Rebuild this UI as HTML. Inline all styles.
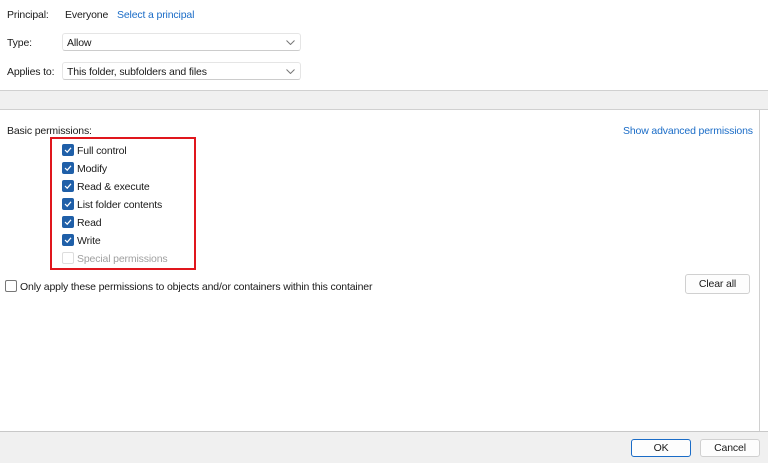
<!DOCTYPE html>
<html><head><style>
body{margin:0;width:768px;height:463px;background:#fff;font-family:"Liberation Sans",sans-serif;font-size:10.5px;letter-spacing:-0.15px;color:#1a1a1a;position:relative;overflow:hidden}
.a{position:absolute;white-space:nowrap}
.sel{position:absolute;left:62px;width:239px;height:18px;border:1px solid #e5e5e5;border-bottom-color:#ccc;border-radius:3px;background:#fff;box-sizing:border-box}
.sel span{position:absolute;left:4px;top:3px}
.sel svg{position:absolute;right:5px;top:6px}
.cb{position:absolute;left:62px;width:12px;height:12px;border-radius:2px;background:#1f5fa8}
.cb svg{position:absolute;left:2px;top:2px}
.lbl{position:absolute;left:77px;margin-top:1px}
.btn{position:absolute;height:18px;border:1px solid #d0d0d0;border-radius:3px;background:#fdfdfd;text-align:center;line-height:16px;box-sizing:border-box}
</style></head><body>
<div class="a" style="left:7px;top:9px">Principal:</div>
<div class="a" style="left:65px;top:9px">Everyone</div>
<div class="a" style="left:117px;top:9px;color:#1a6cc7">Select a principal</div>
<div class="a" style="left:7px;top:37px">Type:</div>
<div class="sel" style="top:33px"><span>Allow</span><svg width="9" height="5"><path d="M0.5 0.5L4.5 4.5L8.5 0.5" stroke="#777" fill="none"/></svg></div>
<div class="a" style="left:7px;top:66px">Applies to:</div>
<div class="sel" style="top:62px"><span>This folder, subfolders and files</span><svg width="9" height="5"><path d="M0.5 0.5L4.5 4.5L8.5 0.5" stroke="#777" fill="none"/></svg></div>
<div class="a" style="left:0;top:90px;width:768px;height:20px;background:#f0f0f0;border-top:1px solid #d0d0d0;border-bottom:1px solid #d0d0d0;box-sizing:border-box"></div>
<div class="a" style="left:759px;top:110px;width:1px;height:321px;background:#d0d0d0"></div>
<div class="a" style="left:0;top:431px;width:768px;height:32px;background:#f0f0f0;border-top:1px solid #c8c8c8;box-sizing:border-box"></div>
<div class="a" style="left:7px;top:125px">Basic permissions:</div>
<div class="a" style="left:623px;top:125px;color:#1a6cc7">Show advanced permissions</div>
<div class="a" style="left:50px;top:137px;width:146px;height:133px;border:2px solid #e0161d;box-sizing:border-box"></div>
<div class="cb" style="top:144px"><svg width="8" height="8"><path d="M1 4L3.2 6.2L7 1.8" stroke="#fff" stroke-width="1.2" fill="none"/></svg></div><div class="lbl a" style="top:144px">Full control</div>
<div class="cb" style="top:162px"><svg width="8" height="8"><path d="M1 4L3.2 6.2L7 1.8" stroke="#fff" stroke-width="1.2" fill="none"/></svg></div><div class="lbl a" style="top:162px">Modify</div>
<div class="cb" style="top:180px"><svg width="8" height="8"><path d="M1 4L3.2 6.2L7 1.8" stroke="#fff" stroke-width="1.2" fill="none"/></svg></div><div class="lbl a" style="top:180px">Read &amp; execute</div>
<div class="cb" style="top:198px"><svg width="8" height="8"><path d="M1 4L3.2 6.2L7 1.8" stroke="#fff" stroke-width="1.2" fill="none"/></svg></div><div class="lbl a" style="top:198px">List folder contents</div>
<div class="cb" style="top:216px"><svg width="8" height="8"><path d="M1 4L3.2 6.2L7 1.8" stroke="#fff" stroke-width="1.2" fill="none"/></svg></div><div class="lbl a" style="top:216px">Read</div>
<div class="cb" style="top:234px"><svg width="8" height="8"><path d="M1 4L3.2 6.2L7 1.8" stroke="#fff" stroke-width="1.2" fill="none"/></svg></div><div class="lbl a" style="top:234px">Write</div>
<div class="a" style="left:62px;top:252px;width:12px;height:12px;border:1px solid #ddd;border-radius:2px;box-sizing:border-box"></div><div class="lbl a" style="top:252px;color:#a0a0a0">Special permissions</div>
<div class="a" style="left:5px;top:280px;width:12px;height:12px;border:1px solid #777;border-radius:2px;box-sizing:border-box"></div>
<div class="a" style="left:20px;top:281px">Only apply these permissions to objects and/or containers within this container</div>
<div class="btn" style="left:685px;top:274px;width:65px;height:20px;line-height:18px">Clear all</div>
<div class="btn" style="left:631px;top:439px;width:60px;height:18px;border-color:#1a6cc7">OK</div>
<div class="btn" style="left:700px;top:439px;width:60px;height:18px">Cancel</div>
</body></html>
